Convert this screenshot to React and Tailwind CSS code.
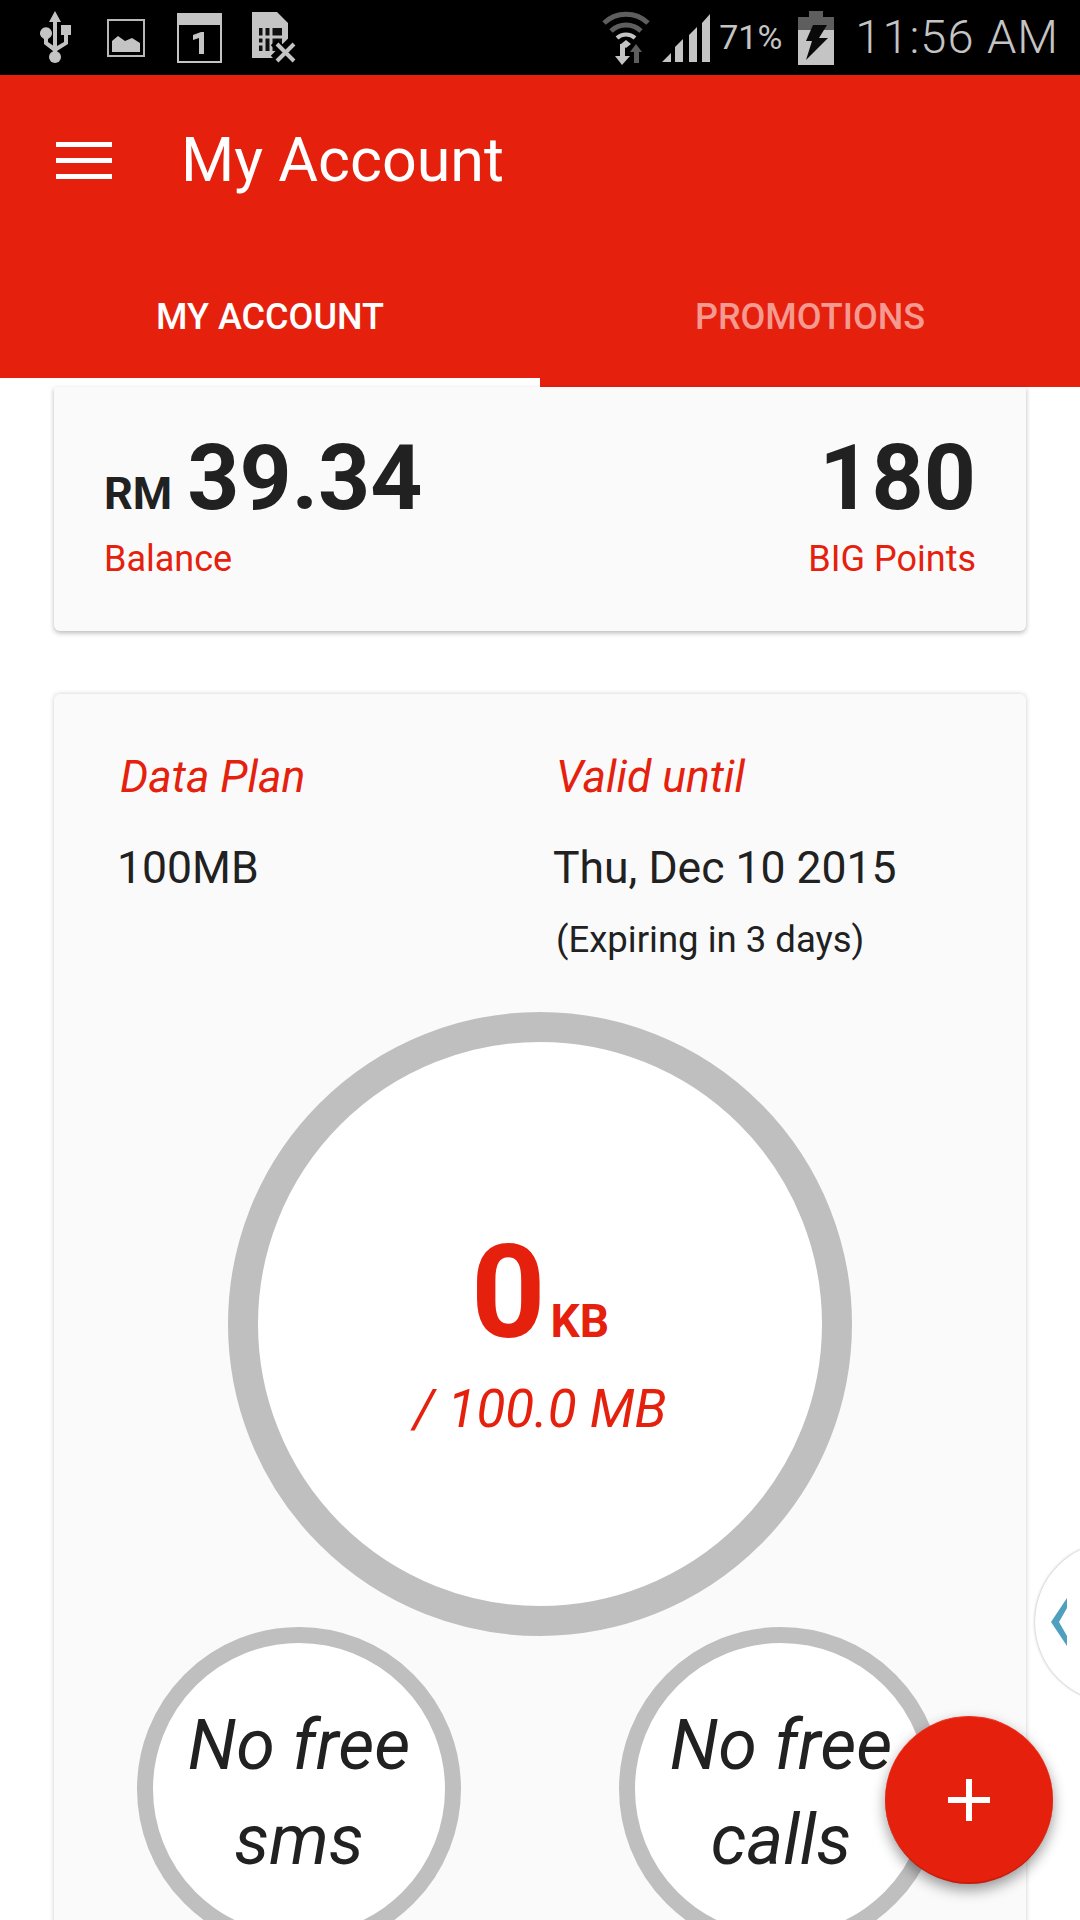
import React from 'react';

const RED = 'text-[#e5210e]';

function UsbIcon() {
  return (
    <svg width="34" height="54" viewBox="0 0 34 54" fill="#c4c4c4">
      <path d="M17 0l6 11h-4v24l7-4v-7h-3V14h10v10h-3v9l-11 7v5h-4v-5L6 33v-5a6 6 0 1 1 4 0v3l5 3.500V11h-4z" />
      <circle cx="17" cy="46" r="6" />
      <rect x="15" y="38" width="4" height="6" />
    </svg>
  );
}

function ImageIcon() {
  return (
    <svg width="38" height="38" viewBox="0 0 38 38">
      <rect x="1" y="1" width="36" height="36" fill="none" stroke="#b8b8b8" strokeWidth="2" />
      <path d="M5 33V22l6-5 7 5 7-3 8 5v9z" fill="#c4c4c4" />
    </svg>
  );
}

function CalendarIcon() {
  return (
    <svg width="45" height="50" viewBox="0 0 45 50">
      <rect x="1" y="1" width="43" height="48" fill="none" stroke="#c4c4c4" strokeWidth="2" />
      <rect x="0" y="0" width="45" height="12" fill="#c4c4c4" />
      <path d="M16 22l8-3h3v22h-5V25l-6 2z" fill="#c4c4c4" />
    </svg>
  );
}

function SimIcon() {
  return (
    <svg width="46" height="52" viewBox="0 0 46 52">
      <path d="M0 0h25l11 11v18L22 46H0z" fill="#c4c4c4" />
      <rect x="7" y="16" width="23" height="23" fill="#111" />
      <path d="M12 16v23M19 16v23M7 25h23M7 32h5M19 25h11" stroke="#c4c4c4" strokeWidth="3" />
      <path d="M22 47l17-17M22 30l17 17" stroke="#000" strokeWidth="9" />
      <path d="M25 49l17-17M25 32l17 17" stroke="#c4c4c4" strokeWidth="4" />
    </svg>
  );
}

function WifiIcon() {
  return (
    <svg width="50" height="54" viewBox="0 0 50 54">
      <path d="M3 12a32 32 0 0 1 44 0" fill="none" stroke="#5e5e5e" strokeWidth="5" />
      <path d="M10 20a22 22 0 0 1 30 0" fill="none" stroke="#5e5e5e" strokeWidth="5" />
      <path d="M16 27a13 13 0 0 1 18 0" fill="none" stroke="#c4c4c4" strokeWidth="4" />
      <path d="M20 33l5-4 5 4-5 4z" fill="#c4c4c4" />
      <path d="M19 33h5v12h5l-8 9-7-9h5z" fill="#c4c4c4" />
      <path d="M35 33l6 8h-3v11h-5V41h-4z" fill="#5e5e5e" />
    </svg>
  );
}

function SignalIcon() {
  return (
    <svg width="48" height="48" viewBox="0 0 48 48" fill="#c4c4c4">
      <path d="M0 48l9-9v9zM13 48V33l8-8v23zM27 48V21l8-8v35zM40 48V9l8-9v48z" />
    </svg>
  );
}

function BatteryIcon() {
  return (
    <svg width="36" height="54" viewBox="0 0 36 54">
      <rect x="11" y="0" width="14" height="6" fill="#5e5e5e" />
      <rect x="0" y="6" width="36" height="13" fill="#5e5e5e" />
      <rect x="0" y="19" width="36" height="35" fill="#c4c4c4" />
      <path d="M15 14h14l-8 13h9L8 49l6-19H8z" fill="#0a0a0a" />
    </svg>
  );
}

function StatusBar() {
  return (
    <div className="flex h-[75px] shrink-0 items-center justify-between bg-black pl-[38px] pr-[21px]">
      <div className="flex items-center gap-[30px]">
        <UsbIcon />
        <div className="ml-[5px]"><ImageIcon /></div>
        <div className="ml-[2px]"><CalendarIcon /></div>
        <SimIcon />
      </div>
      <div className="flex items-center text-[#c4c4c4]">
        <WifiIcon />
        <div className="ml-[11px]"><SignalIcon /></div>
        <span className="ml-[9px] text-[34px]">71%</span>
        <div className="ml-[16px]"><BatteryIcon /></div>
        <span className="ml-[21px] text-[47px] font-light tracking-[1px]">11:56 AM</span>
      </div>
    </div>
  );
}

function Header() {
  return (
    <div className="shrink-0 bg-[#e5210e]">
      <div className="flex h-[172px] items-center pb-[1px] pl-[56px]">
        <div className="flex w-[56px] flex-col gap-[11px]">
          <div className="h-[5px] bg-white" />
          <div className="h-[5px] bg-white" />
          <div className="h-[5px] bg-white" />
        </div>
        <h1 className="ml-[69px] text-[61px] text-white">My Account</h1>
      </div>
      <div className="flex h-[140px]">
        <div className="flex flex-1 items-start justify-center border-b-[9px] border-white pt-[43px] text-[36px] font-medium text-white">
          MY ACCOUNT
        </div>
        <div className="flex flex-1 items-start justify-center pt-[43px] text-[36px] font-medium text-[#f59a90]">
          PROMOTIONS
        </div>
      </div>
    </div>
  );
}

function BalanceCard() {
  return (
    <div className="flex h-[244px] items-start justify-between rounded-b-[6px] bg-[#fafafa] pl-[50px] pr-[50px] pt-[45px] shadow-[0_2px_5px_rgba(0,0,0,0.28)]">
      <div>
        <div className="flex h-[92px] items-baseline gap-[15px] text-[#212121]">
          <span className="text-[45px] leading-[92px] font-bold">RM</span>
          <span className="text-[91px] leading-[92px] font-bold">39.34</span>
        </div>
        <div className={`mt-[8px] text-[36px] ${RED}`}>Balance</div>
      </div>
      <div className="text-right">
        <div className="h-[92px] text-[91px] leading-[92px] font-bold text-[#212121]">180</div>
        <div className={`mt-[8px] text-[36px] ${RED}`}>BIG Points</div>
      </div>
    </div>
  );
}

function SmallCircle({ top, bottom }) {
  return (
    <div className="flex h-[324px] w-[324px] flex-col items-center justify-center rounded-full border-[16px] border-[#bfbfbf] bg-white pt-[8px] text-[70px] leading-[95px] text-[#212121] italic">
      <span>{top}</span>
      <span>{bottom}</span>
    </div>
  );
}

function DataCard() {
  return (
    <div className="mt-[63px] h-[1300px] rounded-[6px] bg-[#fafafa] pt-[57px] shadow-[0_0_5px_rgba(0,0,0,0.2)]">
      <div className="grid grid-cols-[436px_1fr] pl-[63px]">
        <div>
          <div className={`h-[52px] pl-[3px] text-[44.500px] leading-[52px] italic ${RED}`}>Data Plan</div>
          <div className="mt-[39px] text-[44.500px] leading-[52px] text-[#212121]">100MB</div>
        </div>
        <div>
          <div className={`h-[52px] pl-[3px] text-[44.500px] leading-[52px] italic ${RED}`}>Valid until</div>
          <div className="mt-[39px] text-[44.500px] leading-[52px] text-[#212121]">Thu, Dec 10 2015</div>
          <div className="mt-[24px] pl-[3px] text-[36.500px] leading-[44px] text-[#212121]">(Expiring in 3 days)</div>
        </div>
      </div>
      <div className="mx-auto mt-[50px] flex h-[624px] w-[624px] flex-col items-center justify-center rounded-full border-[30px] border-[#bfbfbf] bg-white">
        <div className={`mt-[30px] flex items-baseline ${RED}`}>
          <span className="text-[130px] leading-[130px] font-bold">0</span>
          <span className="ml-[5px] text-[46px] font-bold">KB</span>
        </div>
        <div className={`mt-[12px] text-[53px] italic ${RED}`}>/ 100.0 MB</div>
      </div>
      <div className="mt-[-9px] flex gap-[158px] pl-[83px]">
        <SmallCircle top="No free" bottom="sms" />
        <SmallCircle top="No free" bottom="calls" />
      </div>
    </div>
  );
}

export default function App() {
  return (
    <div className="relative flex h-[1920px] w-[1080px] flex-col overflow-hidden bg-white font-['Roboto',sans-serif]">
      <StatusBar />
      <Header />
      <div className="px-[54px]">
        <BalanceCard />
        <DataCard />
      </div>

      <div className="absolute left-[1035px] top-[1542px] flex h-[160px] w-[160px] items-center rounded-full bg-white pl-[16px] shadow-[0_0_3px_rgba(0,0,0,0.35)]">
        <svg width="16" height="48" viewBox="0 0 16 48">
          <path d="M16 0L0 24l16 24V38L8 24 16 10z" fill="#4f9fbf" />
        </svg>
      </div>

      <button className="absolute left-[885px] top-[1716px] flex h-[168px] w-[168px] items-center justify-center rounded-full border-t-[1px] border-b-[2px] border-t-[#f5301c] border-b-[#c81d0c] bg-[#e5210e] shadow-[0_6px_14px_rgba(0,0,0,0.4)]">
        <svg width="42" height="42" viewBox="0 0 42 42" fill="#ffffff">
          <rect x="18" y="0" width="6" height="42" />
          <rect x="0" y="18" width="42" height="6" />
        </svg>
      </button>
    </div>
  );
}
